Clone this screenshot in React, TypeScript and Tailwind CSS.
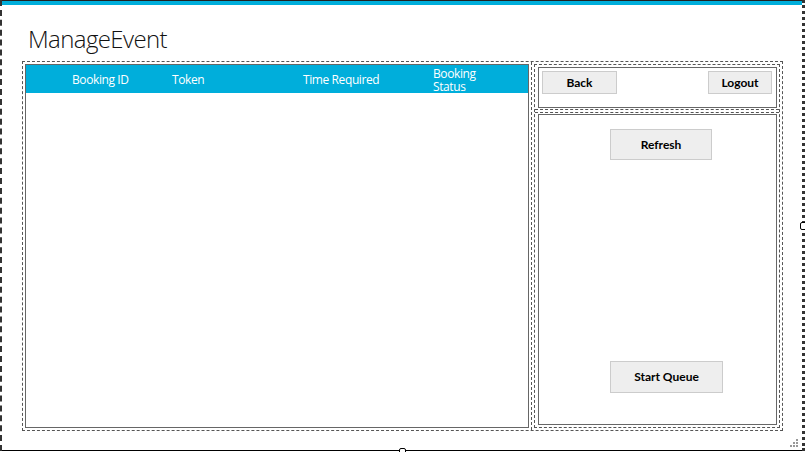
import React from "react";

const Btn = ({ label, className }: { label: string; className: string }) => (
  <div
    className={`flex items-center justify-center bg-[#eeeeee] border border-[#cccccc] text-[12px] font-bold text-black leading-none font-['Lato',sans-serif] ${className}`}
  >
    {label}
  </div>
);

export default function App() {
  const dots = [
    [796, 439],
    [793, 442],
    [796, 442],
    [790, 445],
    [793, 445],
    [796, 445],
  ];
  return (
    <div className="relative w-[805px] h-[452px] bg-white overflow-hidden font-['Segoe_UI','Open_Sans',sans-serif]">
      <div className="flex h-[451px] w-[805px]">
        <div className="w-[2px] h-full border-l-2 border-dashed border-[#333]" />
        <div className="w-[800px] h-full flex flex-col border-t border-b border-t-[#222] border-b-black">
          <div className="h-[4px] bg-[#00aedb]" />
          <div className="h-[56px] pt-[18px] pl-[26px]">
            <div className="text-[24px] leading-[32px] font-light tracking-[-0.6px] text-[#111]">ManageEvent</div>
          </div>
          <div className="ml-[20px] w-[761px] h-[370px] border border-dashed border-[#555] p-[2px] flex">
            <div className="w-[504px] h-full border border-[#666] flex flex-col">
              <div className="h-[28px] bg-[#00aedb] flex items-center text-white text-[12px] tracking-[-0.4px] pl-[46px] pt-[2px]">
                <div className="w-[100px]">Booking ID</div>
                <div className="w-[131px]">Token</div>
                <div className="w-[130px]">Time Required</div>
                <div className="w-[60px] leading-[13px]">
                  Booking
                  <br />
                  Status
                </div>
              </div>
              <div className="flex-1 bg-white" />
            </div>
            <div className="ml-[2px] -my-[2px] w-0 border-l border-dashed border-[#555]" />
            <div className="ml-[2px] w-[246px] h-full border border-dashed border-[#555] pt-[2px] pl-[3px] pr-[2px] pb-[2px] flex flex-col">
              <div className="h-[41px] border border-[#666] flex justify-between items-start pt-[3px] pl-[3px] pr-[4px]">
                <Btn label="Back" className="w-[75px] h-[23px]" />
                <Btn label="Logout" className="w-[64px] h-[23px]" />
              </div>
              <div className="-ml-[3px] -mr-[2px] mt-[1px] border-t border-dashed border-[#555]" />
              <div className="-ml-[3px] -mr-[2px] mt-[2px] mb-[1px] border-t border-dashed border-[#555]" />
              <div className="flex-1 border border-[#666] flex flex-col items-start pl-[71px] pt-[14px] pb-[31px]">
                <Btn label="Refresh" className="w-[102px] h-[31px]" />
                <Btn label="Start Queue" className="mt-auto w-[113px] h-[32px]" />
              </div>
            </div>
          </div>
        </div>
        <div className="w-[3px] h-full border-r-[3px] border-dotted border-[#333]" />
      </div>
      <div className="absolute left-[800px] top-[222px] w-[7px] h-[8px] bg-white border border-black rounded-[2px]" />
      <div className="absolute left-[399px] top-[448px] w-[7px] h-[7px] bg-white border border-black rounded-[2px]" />
      {dots.map(([x, y], i) => (
        <div
          key={i}
          className="absolute w-[2px] h-[2px] bg-[#999]"
          style={{ left: x, top: y }}
        />
      ))}
    </div>
  );
}
